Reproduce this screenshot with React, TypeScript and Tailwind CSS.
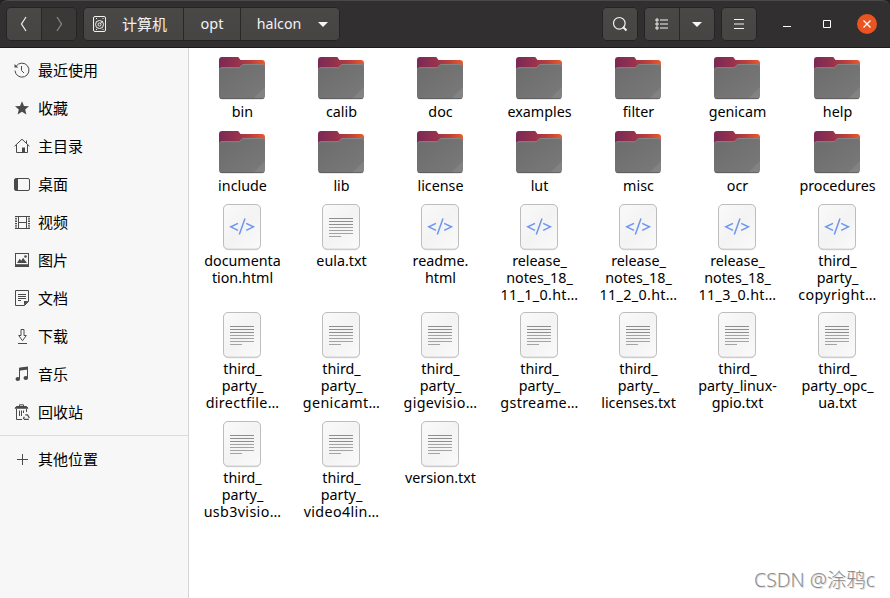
import React from 'react';

type FileKind = 'folder' | 'html' | 'text';

interface FileEntry {
  kind: FileKind;
  lines: string[];
}

const folder = (name: string): FileEntry => ({ kind: 'folder', lines: [name] });
const html = (...lines: string[]): FileEntry => ({ kind: 'html', lines });
const text = (...lines: string[]): FileEntry => ({ kind: 'text', lines });

const ROWS: { height: string; files: FileEntry[] }[] = [
  { height: 'h-[74px]', files: ['bin', 'calib', 'doc', 'examples', 'filter', 'genicam', 'help'].map(folder) },
  { height: 'h-[75px]', files: ['include', 'lib', 'license', 'lut', 'misc', 'ocr', 'procedures'].map(folder) },
  {
    height: 'h-[108px]',
    files: [
      html('documenta', 'tion.html'),
      text('eula.txt'),
      html('readme.', 'html'),
      html('release_', 'notes_18_', '11_1_0.ht…'),
      html('release_', 'notes_18_', '11_2_0.ht…'),
      html('release_', 'notes_18_', '11_3_0.ht…'),
      html('third_', 'party_', 'copyright…'),
    ],
  },
  {
    height: 'h-[109px]',
    files: [
      text('third_', 'party_', 'directfile…'),
      text('third_', 'party_', 'genicamt…'),
      text('third_', 'party_', 'gigevisio…'),
      text('third_', 'party_', 'gstreame…'),
      text('third_', 'party_', 'licenses.txt'),
      text('third_', 'party_linux-', 'gpio.txt'),
      text('third_', 'party_opc_', 'ua.txt'),
    ],
  },
  {
    height: 'h-[108px]',
    files: [
      text('third_', 'party_', 'usb3visio…'),
      text('third_', 'party_', 'video4lin…'),
      text('version.txt'),
    ],
  },
];

const PLACES: { label: string; icon: React.ReactNode }[] = [
  {
    label: '最近使用',
    icon: (
      <>
        <path d="M2.2 4.2A7 7 0 1 1 1 8.6" />
        <path d="M.5 2v3.6h3.8z" fill="currentColor" stroke="none" />
        <path d="M7.5 4v4.5L10 11" />
      </>
    ),
  },
  {
    label: '收藏',
    icon: (
      <path
        d="M8 1.3l2 4.6 5 .4-3.8 3.2 1.2 4.9L8 11.8l-4.4 2.6 1.2-4.9L1 6.3l5-.4z"
        fill="currentColor"
        stroke="none"
      />
    ),
  },
  {
    label: '主目录',
    icon: (
      <>
        <path d="M.6 8.2L8 1.2l7.4 7M2.5 7v7.5h11V7M12.5 5V2.5" />
        <path d="M8 9.5h3V14H8z" fill="currentColor" stroke="none" />
      </>
    ),
  },
  {
    label: '桌面',
    icon: (
      <>
        <rect x=".5" y="2.5" width="15" height="12" rx="1.5" />
        <path d="M1 3h3v11H1z" fill="currentColor" stroke="none" />
      </>
    ),
  },
  {
    label: '视频',
    icon: (
      <>
        <path d="M4.5 2v13M12.5 2v13M1 2.5h15M1 14.5h15M4 8.5h9" />
        <path d="M2 2v13M15 2v13" strokeWidth="2" strokeDasharray="1.3 1" />
      </>
    ),
  },
  {
    label: '图片',
    icon: (
      <>
        <rect x="1.5" y="1.5" width="13" height="13" />
        <path d="M2 13.2h12" strokeWidth="2" />
        <path d="M3 11l2.7-4.2 1.6 2L9 5.8 13 11z" fill="currentColor" stroke="none" />
        <circle cx="11.5" cy="4.5" r="1.3" fill="currentColor" stroke="none" />
      </>
    ),
  },
  {
    label: '文档',
    icon: (
      <>
        <path d="M1.5.5h13v11l-4 4h-9zM4 4.5h8M4 6.5h8M4 8.5h8M4 10.5h3" />
        <path d="M10 15.5V11h4.5z" fill="currentColor" stroke="none" />
      </>
    ),
  },
  {
    label: '下载',
    icon: <path d="M7 1.5h3v6h2.3L8.5 12.7 4.7 7.5H7zM4 15.5h9" />,
  },
  {
    label: '音乐',
    icon: (
      <>
        <path d="M5.5 13V2.5l8-1V12" />
        <path d="M5 1.8L14 .6v3L5 4.7z" fill="currentColor" stroke="none" />
        <ellipse cx="3.8" cy="13" rx="2.3" ry="1.9" fill="currentColor" stroke="none" />
        <ellipse cx="11.8" cy="12" rx="2.3" ry="1.9" fill="currentColor" stroke="none" />
      </>
    ),
  },
  {
    label: '回收站',
    icon: (
      <>
        <path d="M1 4.2L2.5 2.5h10L14 4.2z" fill="currentColor" />
        <path d="M5.5 2V.8h4V2M2.5 5v10.5H8M5.5 6.5V12M7.5 6.5V12M9.5 6.5V9M12.5 5v3" />
        <path d="M9.3 15l1-2.2M11.3 10.8h2.2l1.8 3.2M10 15.3h4.8" strokeWidth="1.3" />
      </>
    ),
  },
];

function Glyph({ children }: { children: React.ReactNode }) {
  return (
    <svg viewBox="0 0 16 16" className="h-4 w-4 shrink-0" fill="none" stroke="currentColor" strokeWidth="1">
      {children}
    </svg>
  );
}

function FileIcon({ kind }: { kind: FileKind }) {
  if (kind === 'folder') {
    return (
      <svg viewBox="0 0 48 48" className="h-12 w-12 shrink-0" fill="none">
        <path d="M4 3h15c1.2 0 1.8.5 2.4 1.4L22.5 6H44c1.8 0 3 1.2 3 3v32H1V6c0-1.8 1.2-3 3-3z" fill="url(#folder-back)" />
        <path
          d="M4 13.3h16.5c.9 0 1.5-.4 2-1l1.2-1.4c.5-.5 1-.8 1.8-.8H44c1.8 0 3 1.2 3 3V42c0 1.8-1.2 3-3 3H4c-1.8 0-3-1.2-3-3V16.3c0-1.8 1.2-3 3-3z"
          fill="url(#folder-front)"
        />
        <path d="M1.5 15.5c.3-1.2 1.2-1.8 2.5-1.8h16.5c.9 0 1.5-.4 2-1l1.2-1.4c.5-.5 1-.8 1.8-.8H44c1.3 0 2.2.6 2.5 1.8" stroke="#8c8a8a" strokeWidth=".8" />
        <path d="M47 33v9c0 1.8-1.2 3-3 3h-9z" fill="#fff" fillOpacity=".08" />
        <path d="M2 44c.5.5 1 .7 2 .7h40c1 0 1.5-.2 2-.7" stroke="#505050" strokeWidth=".7" />
      </svg>
    );
  }

  return (
    <svg viewBox="0 0 48 48" className="h-12 w-12 shrink-0" fill="none">
      <rect x="5.5" y="1.8" width="37" height="45" rx="4.5" stroke="#000" strokeOpacity=".12" />
      <rect x="5.5" y="1.5" width="37" height="44.7" rx="4.5" fill="url(#page)" stroke="#bdbdbd" />
      {kind === 'html' ? (
        <path d="M20 20.3l-7.2 3.5 7.2 3.5M28.2 20.3l7.2 3.5-7.2 3.5M27 15.5l-5.7 16" stroke="#6c95ee" strokeWidth="1.5" />
      ) : (
        <>
          <path d="M12 15.5h24M12 18.5h24M12 21.5h24" stroke="#8e8e8e" />
          <path d="M12 24.5h24M12 27.5h24M12 30.5h24M12 33.5h12" stroke="#a3a3a3" />
        </>
      )}
    </svg>
  );
}

function FileItem({ file, last }: { file: FileEntry; last: boolean }) {
  return (
    <div className={`flex shrink-0 flex-col items-center ${last ? 'w-[100px]' : 'w-[98px]'}`}>
      <FileIcon kind={file.kind} />
      <div className="mt-px pl-px text-center text-[14.3px] leading-[17px] whitespace-nowrap text-black">
        {file.lines.map(line => (
          <div key={line} className={line.endsWith('…') ? 'tracking-[0.35px]' : ''}>
            {line}
          </div>
        ))}
      </div>
    </div>
  );
}

function Caret() {
  return (
    <svg viewBox="0 0 10 5" className="h-[5px] w-2.5 shrink-0">
      <path d="M0 0h10L5 5z" fill="#f5f5f5" />
    </svg>
  );
}

const BUTTON = 'flex h-full items-center justify-center bg-linear-to-b from-[#4a4847] to-[#474543]';
const GROUP = 'flex h-[34px] overflow-hidden rounded-[5px] border border-[#252424]';

function HeaderBar() {
  return (
    <header className="flex h-12 items-center rounded-t-lg border-t border-b border-t-[#4b494a] border-b-[#1d1a1c] bg-[#322f30] pl-1.5 text-[#f2f2f2]">
      <div className={`${GROUP} w-[71px]`}>
        <div className={`${BUTTON} w-[35px] border-r border-[#292828]`}>
          <svg viewBox="0 0 16 16" className="h-4 w-4" fill="none" stroke="#f2f2f2" strokeWidth="1.2">
            <path d="M10 1L5.5 8l4.5 7" />
          </svg>
        </div>
        <div className="flex h-full flex-1 items-center justify-center bg-[#3a3938]">
          <svg viewBox="0 0 16 16" className="h-4 w-4" fill="none" stroke="#8b8a89" strokeWidth="1.2">
            <path d="M6 1l4.5 7L6 15" />
          </svg>
        </div>
      </div>

      <div className={`${GROUP} ml-1.5 w-[257px] text-[14.5px]`}>
        <div className={`${BUTTON} w-[100px] gap-[15px] border-r border-[#292828] pr-[7px]`}>
          <svg viewBox="0 0 14 16" className="h-4 w-3.5" fill="none" stroke="#f2f2f2">
            <rect x=".5" y=".5" width="12" height="15" rx="1.5" />
            <circle cx="6.5" cy="8.5" r="4" />
            <circle cx="6.5" cy="8.5" r="1.5" />
            <path d="M7.5 7.5L9.5 5M3 13.5h1M9.5 13.5h1M3 2.5h1M9.5 2.5h1" />
          </svg>
          <span className="text-[15px]">计算机</span>
        </div>
        <div className={`${BUTTON} w-[57px] border-r border-[#292828]`}>opt</div>
        <div className={`${BUTTON} flex-1 gap-[17px] pl-[5px]`}>
          <span className="text-[14.2px]">halcon</span>
          <Caret />
        </div>
      </div>

      <div className={`${GROUP} ml-auto w-9`}>
        <div className={`${BUTTON} w-full`}>
          <svg viewBox="0 0 16 16" className="h-4 w-4" fill="none" stroke="#f2f2f2">
            <circle cx="7.3" cy="7.3" r="5.8" strokeWidth="1.2" />
            <path d="M11 11l3.5 3.5" strokeWidth="2" />
          </svg>
        </div>
      </div>
      <div className={`${GROUP} ml-1.5 w-[71px]`}>
        <div className={`${BUTTON} w-[35px] border-r border-[#292828]`}>
          <svg viewBox="0 0 14 12" className="h-3 w-3.5" fill="none" stroke="#f2f2f2">
            <path d="M5 2h8M5 6h8M5 10h8" />
            <path d="M1 1h2v2H1zM1 5h2v2H1zM1 9h2v2H1z" />
          </svg>
        </div>
        <div className={`${BUTTON} flex-1`}>
          <Caret />
        </div>
      </div>
      <div className={`${GROUP} ml-1.5 w-9`}>
        <div className={`${BUTTON} w-full`}>
          <svg viewBox="0 0 10 10" className="h-2.5 w-2.5" stroke="#f2f2f2">
            <path d="M0 .5h10M0 5h10M0 9.5h10" />
          </svg>
        </div>
      </div>

      <div className="ml-[26px] flex items-center">
        <svg viewBox="0 0 8 8" className="h-2 w-2" stroke="#fff">
          <path d="M0 6.5h8" />
        </svg>
        <svg viewBox="0 0 8 8" className="ml-8 h-2 w-2" fill="none" stroke="#fff">
          <path d="M.5.5h7v7h-7z" />
        </svg>
        <div className="mr-[13px] ml-[26px] flex h-5 w-5 items-center justify-center rounded-full bg-[#e95420]">
          <svg viewBox="0 0 8 8" className="h-2 w-2" stroke="#fff" strokeWidth="1.3">
            <path d="M.5.5l7 7M7.5.5l-7 7" />
          </svg>
        </div>
      </div>
    </header>
  );
}

function PlaceRow({ label, children }: { label: string; children: React.ReactNode }) {
  return (
    <li className="flex h-[38px] items-center gap-2 pl-3.5">
      <span className="text-[#4a4a4a]">
        <Glyph>{children}</Glyph>
      </span>
      <span className="text-[15px] leading-5 text-black">{label}</span>
    </li>
  );
}

function Sidebar() {
  return (
    <nav className="w-[189px] shrink-0 border-r border-[#d5d5d5] bg-[#f7f7f7] pt-[3px]">
      <ul>
        {PLACES.map(place => (
          <PlaceRow key={place.label} label={place.label}>
            {place.icon}
          </PlaceRow>
        ))}
      </ul>
      <ul className="mt-1 border-t border-[#dcdcdc] pt-1">
        <PlaceRow label="其他位置">
          <path d="M3 8.5h11M8.5 3v11" />
        </PlaceRow>
      </ul>
    </nav>
  );
}

export default function App() {
  return (
    <div className="relative flex h-[598px] w-[890px] flex-col overflow-hidden bg-[#252223] font-['Noto_Sans','Noto_Sans_CJK_SC',sans-serif]">
      {/* Gradients shared by every file icon */}
      <svg className="absolute h-0 w-0">
        <defs>
          <linearGradient id="folder-back" x1="0" y1="0" x2="1" y2="0">
            <stop offset="0" stopColor="#7a2955" />
            <stop offset=".4" stopColor="#96324d" />
            <stop offset=".7" stopColor="#bd3f3a" />
            <stop offset="1" stopColor="#ea5b2b" />
          </linearGradient>
          <linearGradient id="folder-front" x1="0" y1="0" x2="1" y2="1">
            <stop offset="0" stopColor="#6b6b6b" />
            <stop offset="1" stopColor="#7a7a7a" />
          </linearGradient>
          <linearGradient id="page" x1="0" y1="0" x2="1" y2="1">
            <stop offset="0" stopColor="#fafafa" />
            <stop offset=".5" stopColor="#f3f3f3" />
            <stop offset="1" stopColor="#fafafa" />
          </linearGradient>
        </defs>
      </svg>

      <HeaderBar />

      <div className="flex min-h-0 flex-1">
        <Sidebar />
        <main className="flex-1 bg-white pt-1.5 pl-1">
          {ROWS.map((row, i) => (
            <div key={i} className={`flex gap-px ${row.height}`}>
              {row.files.map((file, col) => (
                <FileItem key={col} file={file} last={col === 6} />
              ))}
            </div>
          ))}
        </main>
      </div>

      <div className="absolute right-[15px] bottom-1.5 text-[19.4px] leading-6 font-light text-[#8c8c8c] [text-shadow:1px_1px_0_#dedede]">
        CSDN @涂鸦c
      </div>
    </div>
  );
}
